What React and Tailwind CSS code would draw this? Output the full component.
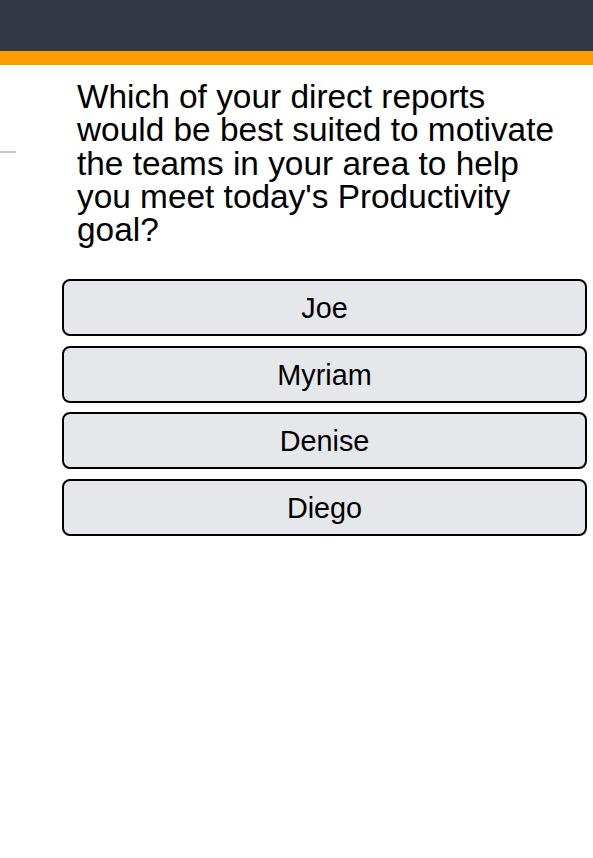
import React from 'react';

const options = ['Joe', 'Myriam', 'Denise', 'Diego'];

export default function App() {
  return (
    <div className="min-h-screen bg-white text-black" style={{ fontFamily: '"Liberation Sans", Arial, sans-serif' }}>
      <div className="h-[51px] bg-[#343a45]" />
      <div className="h-[14px] bg-[#ff9c00]" />

      <div className="flex">
        <div className="w-[62px] shrink-0 pt-[86px]">
          <div className="h-[2px] w-[16px] bg-[#c8c8c8]" />
        </div>

        <div className="w-[525px] pt-[15px]">
          <h1 className="w-[505px] pl-[15px] text-[33.4px] leading-[33.3px] font-normal">
            Which of your direct reports would be best suited to motivate the teams in your area to help you meet today's Productivity goal?
          </h1>

          <div className="mt-[33px] flex flex-col gap-[9.5px]">
            {options.map(name => (
              <button
                key={name}
                className="h-[57px] w-full rounded-[8px] border-2 border-black bg-[#e5e7eb] pt-[2px] text-[28.8px] text-black"
              >
                {name}
              </button>
            ))}
          </div>
        </div>
      </div>
    </div>
  );
}
